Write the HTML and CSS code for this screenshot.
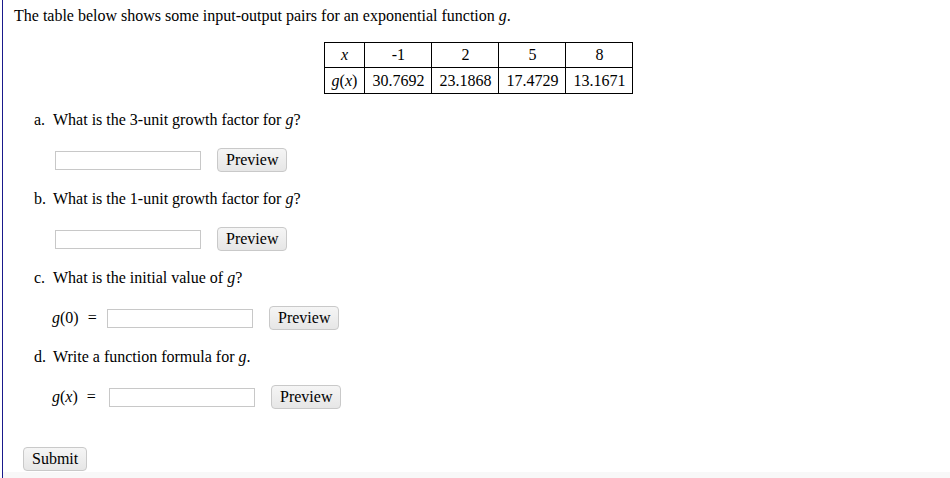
FILE: index.html
```html
<!DOCTYPE html>
<html>
<head>
<meta charset="utf-8">
<link rel="stylesheet" href="styles.css">
</head>
<body>
<div class="page">
  <p class="intro">The table below shows some input-output pairs for an exponential function <i class="m">g</i>.</p>
  <div class="table-wrap">
    <table class="data">
      <tr><td><i class="m">x</i></td><td>-1</td><td>2</td><td>5</td><td>8</td></tr>
      <tr><td><i class="m">g</i>(<i class="m">x</i>)</td><td>30.7692</td><td>23.1868</td><td>17.4729</td><td>13.1671</td></tr>
    </table>
  </div>
  <div class="q">
    <div class="qtext"><span class="lbl">a.</span>What is the 3-unit growth factor for <i class="m">g</i>?</div>
    <div class="ans"><input class="box" type="text"><button class="btn">Preview</button></div>
  </div>
  <div class="q">
    <div class="qtext"><span class="lbl">b.</span>What is the 1-unit growth factor for <i class="m">g</i>?</div>
    <div class="ans"><input class="box" type="text"><button class="btn">Preview</button></div>
  </div>
  <div class="q">
    <div class="qtext"><span class="lbl">c.</span>What is the initial value of <i class="m">g</i>?</div>
    <div class="ans eq"><span class="math"><i class="m">g</i>(0) <span class="eqs">=</span></span><input class="box" type="text"><button class="btn">Preview</button></div>
  </div>
  <div class="q">
    <div class="qtext"><span class="lbl">d.</span>Write a function formula for <i class="m">g</i>.</div>
    <div class="ans eq eqx"><span class="math"><i class="m">g</i>(<i class="m">x</i>) <span class="eqs">=</span></span><input class="box" type="text"><button class="btn">Preview</button></div>
  </div>
  <div class="submit-row"><button class="btn submit">Submit</button></div>
  <div class="footer"></div>
</div>
</body>
</html>
```

FILE: styles.css
```css
html, body {
  margin: 0;
  padding: 0;
  background: #fff;
}
body {
  font-family: "Liberation Serif", "Times New Roman", serif;
  font-size: 16px;
  color: #000;
}
.page {
  margin-left: 2px;
  border-left: 1px solid #1a1a8c;
  min-height: 478px;
  box-sizing: border-box;
  padding-top: 7px;
}
.intro {
  margin: 0 0 0 11px;
  line-height: 18px;
}
.m {
  font-style: italic;
  font-family: "Liberation Serif", serif;
}
.table-wrap {
  display: flex;
  justify-content: center;
  padding-left: 4px;
  margin-top: 17px;
}
.data {
  border-collapse: collapse;
}
.data td {
  border: 1px solid #000;
  padding: 0 7px;
  height: 25px;
  text-align: center;
  line-height: 18px;
}
.data tr:first-child td {
  height: 24px;
}
.q {
  margin-top: 17px;
}
.q + .q {
  margin-top: 18px;
}
.qtext {
  line-height: 18px;
  padding-left: 31px;
  white-space: nowrap;
}
.lbl {
  display: inline-block;
  width: 19px;
}
.ans {
  display: flex;
  align-items: center;
  height: 24px;
  margin-top: 19px;
  padding-left: 52px;
}
.ans.eq {
  padding-left: 49px;
}
.math {
  width: 55px;
  white-space: nowrap;
}
.eqx .math {
  width: 57px;
}
.eqs {
  margin-left: 5px;
}
.box {
  width: 146px;
  height: 19px;
  box-sizing: border-box;
  border: 1px solid #c8c8c8;
  padding: 0;
  margin: 0;
  background: #fff;
}
.btn {
  font-family: "Liberation Serif", "Times New Roman", serif;
  font-size: 16px;
  height: 24px;
  padding: 0 8px;
  margin-left: 16px;
  border: 1px solid #c9c9c9;
  border-radius: 4px;
  background: linear-gradient(#f5f5f5, #e6e6e6);
  color: #000;
}
.submit-row {
  margin-top: 38px;
  padding-left: 20px;
  display: flex;
}
.submit {
  margin-left: 0;
  padding: 0 8px;
}
.footer {
  margin-top: 1px;
  height: 6px;
  background: #f8f8f8;
}
```
